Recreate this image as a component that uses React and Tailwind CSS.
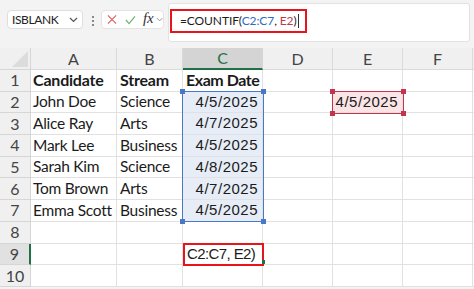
import React from "react";

const data = [
  ["Candidate", "Stream", "Exam Date"],
  ["John Doe", "Science", "4/5/2025"],
  ["Alice Ray", "Arts", "4/7/2025"],
  ["Mark Lee", "Business", "4/5/2025"],
  ["Sarah Kim", "Science", "4/8/2025"],
  ["Tom Brown", "Arts", "4/7/2025"],
  ["Emma Scott", "Business", "4/5/2025"],
  ["", "", ""],
  ["", "", ""],
  ["", "", ""],
];

const cols = ["A", "B", "C", "D", "E", "F"];

export default function App() {
  return (
    <div className="w-[474px] h-[289px] overflow-hidden bg-[#f3f3f3] font-['Lato',sans-serif] text-[#1b1b1b]">
      {/* toolbar */}
      <div className="h-[48px] flex items-start pt-[3px]">
        <div className="mt-[7px] ml-[7px] w-[76px] h-[19px] bg-white border border-[#dedede] rounded-[4px] flex items-center justify-between pl-[4px] pr-[4px]">
          <span className="text-[12px] tracking-[-0.4px] text-[#222]">ISBLANK</span>
          <svg width="9" height="6" viewBox="0 0 9 6"><path d="M1 1l3.5 3.5L8 1" fill="none" stroke="#555" strokeWidth="1.2" /></svg>
        </div>
        <div className="mt-[13px] ml-[8px] w-[4px] flex flex-col items-center gap-[2px]">
          <span className="w-[2px] h-[2px] bg-[#666] rounded-full" />
          <span className="w-[2px] h-[2px] bg-[#666] rounded-full" />
          <span className="w-[2px] h-[2px] bg-[#666] rounded-full" />
        </div>
        <div className="mt-[7px] ml-[6px] w-[63px] h-[19px] bg-white border border-[#e3e3e3] rounded-[4px] flex items-center pl-[5px]">
          <svg width="11" height="11" viewBox="0 0 11 11"><path d="M1 1l9 9M10 1l-9 9" stroke="#e05a5a" strokeWidth="1.2" fill="none" /></svg>
          <svg className="ml-[8px]" width="12" height="10" viewBox="0 0 12 10"><path d="M1 5l3.5 4L11 1" stroke="#6bb36b" strokeWidth="1.3" fill="none" /></svg>
          <span className="ml-[7px] font-['Liberation_Serif',serif] italic text-[15px] leading-none text-[#333] -mt-[2px]">fx</span>
          <svg className="ml-[2px]" width="8" height="5" viewBox="0 0 8 5"><path d="M1 1l3 3 3-3" fill="none" stroke="#888" strokeWidth="1" /></svg>
        </div>
        <div className="ml-[4px] w-[302px] h-[39px] bg-white border border-[#e2e2e2] rounded-[3px] relative">
          <div className="absolute left-[1px] top-[5px] w-[137px] h-[24px] border-2 border-[#e8141b] flex items-center pl-[8px]">
            <span className="text-[12px] tracking-[-0.1px] whitespace-nowrap">
              =COUNTIF(<span className="text-[#2f6cc0]">C2:C7</span>, <span className="text-[#c0394b]">E2</span>)
            </span>
            <span className="ml-[1px] w-px h-[14px] bg-[#333]" />
          </div>
        </div>
      </div>

      {/* grid */}
      <div className="relative grid grid-cols-[31px_86px_66px_80px_70px_70px_70px_1fr] grid-rows-[22px_repeat(10,21.7px)] bg-white text-[16px]">
        {/* header row */}
        <div className="relative bg-[#f0f0f0] border-r border-b border-[#d6d6d6]">
          <svg className="absolute right-[2px] bottom-[2px]" width="16" height="16" viewBox="0 0 16 16"><polygon points="16,0 16,16 0,16" fill="#dcdcdc" /></svg>
        </div>
        {cols.map((c) => (
          <div
            key={c}
            className={
              c === "C"
                ? "bg-[#d4d4d4] border-r border-[#d6d6d6] border-b-2 border-b-[#1e7145] flex items-center justify-center text-[#1e7145]"
                : "bg-[#f0f0f0] border-r border-b border-[#dadada] flex items-center justify-center text-[#444]"
            }
          >
            {c}
          </div>
        ))}
        <div className="bg-[#f0f0f0] border-b border-[#dadada]" />

        {data.map((r, i) => {
          const txt = i === 0 ? "font-bold tracking-[-0.2px]" : "text-[15.5px] tracking-[-0.25px]";
          return (
            <React.Fragment key={i}>
              <div
                className={
                  i === 8
                    ? "bg-[#e1e1e1] border-r-2 border-r-[#1e7145] border-b border-b-[#d6d6d6] flex items-center justify-center text-[#444]"
                    : "bg-[#f0f0f0] border-r border-b border-[#d6d6d6] flex items-center justify-center text-[#444]"
                }
              >
                {i + 1}
              </div>
              <div className={"border-r border-b border-[#e1e1e1] flex items-center pl-[2px] whitespace-nowrap " + txt}>{r[0]}</div>
              <div className={"border-r border-b border-[#e1e1e1] flex items-center pl-[3px] whitespace-nowrap " + txt}>{r[1]}</div>
              <div
                className={
                  "border-r border-b border-[#e1e1e1] flex items-center whitespace-nowrap " +
                  (i === 0
                    ? "font-bold tracking-[-0.45px] pl-[3px]"
                    : i >= 1 && i <= 6
                    ? "bg-[#e6edf7] justify-end pr-[4px] font-['Liberation_Sans',sans-serif] text-[15px] tracking-[0.5px]"
                    : "")
                }
              >
                {r[2]}
              </div>
              <div className="border-r border-b border-[#e1e1e1]" />
              <div className={"border-r border-b border-[#e1e1e1] flex items-center justify-end pr-[4px] font-['Liberation_Sans',sans-serif] text-[15px] tracking-[0.5px] " + (i === 1 ? "bg-[#fbe4e6]" : "")}>
                {i === 1 ? "4/5/2025" : ""}
              </div>
              <div className="border-r border-b border-[#e1e1e1]" />
              <div className="border-b border-[#e1e1e1]" />
            </React.Fragment>
          );
        })}

        {/* C2:C7 selection */}
        <div className="absolute left-[182px] top-[43px] w-[82px] h-[131px] border-[1.5px] border-[#4a78c8] pointer-events-none">
          <span className="absolute -left-[3px] -top-[3px] w-[5px] h-[5px] bg-[#4a78c8]" />
          <span className="absolute -right-[3px] -top-[3px] w-[5px] h-[5px] bg-[#4a78c8]" />
          <span className="absolute -left-[3px] -bottom-[3px] w-[5px] h-[5px] bg-[#4a78c8]" />
          <span className="absolute -right-[3px] -bottom-[3px] w-[5px] h-[5px] bg-[#4a78c8]" />
        </div>

        {/* E2 reference */}
        <div className="absolute left-[332px] top-[43px] w-[72px] h-[23px] border-[1.5px] border-[#c6334d] pointer-events-none">
          <span className="absolute -left-[3px] -top-[3px] w-[5px] h-[5px] bg-[#c6334d]" />
          <span className="absolute -right-[3px] -top-[3px] w-[5px] h-[5px] bg-[#c6334d]" />
          <span className="absolute -left-[3px] -bottom-[3px] w-[5px] h-[5px] bg-[#c6334d]" />
          <span className="absolute -right-[3px] -bottom-[3px] w-[5px] h-[5px] bg-[#c6334d]" />
        </div>

        {/* C9 editing cell */}
        <div className="absolute left-[183px] top-[195px] w-[81px] h-[23px] border-2 border-[#e8141b] bg-white flex items-center pl-[2px]">
          <span className="whitespace-nowrap font-['Liberation_Sans',sans-serif] text-[15px] tracking-[-0.6px]">C2:C7, E2)</span>
          <span className="absolute -right-[3px] bottom-[0px] w-[3px] h-[4px] bg-[#1e7145]" />
        </div>
      </div>
    </div>
  );
}
